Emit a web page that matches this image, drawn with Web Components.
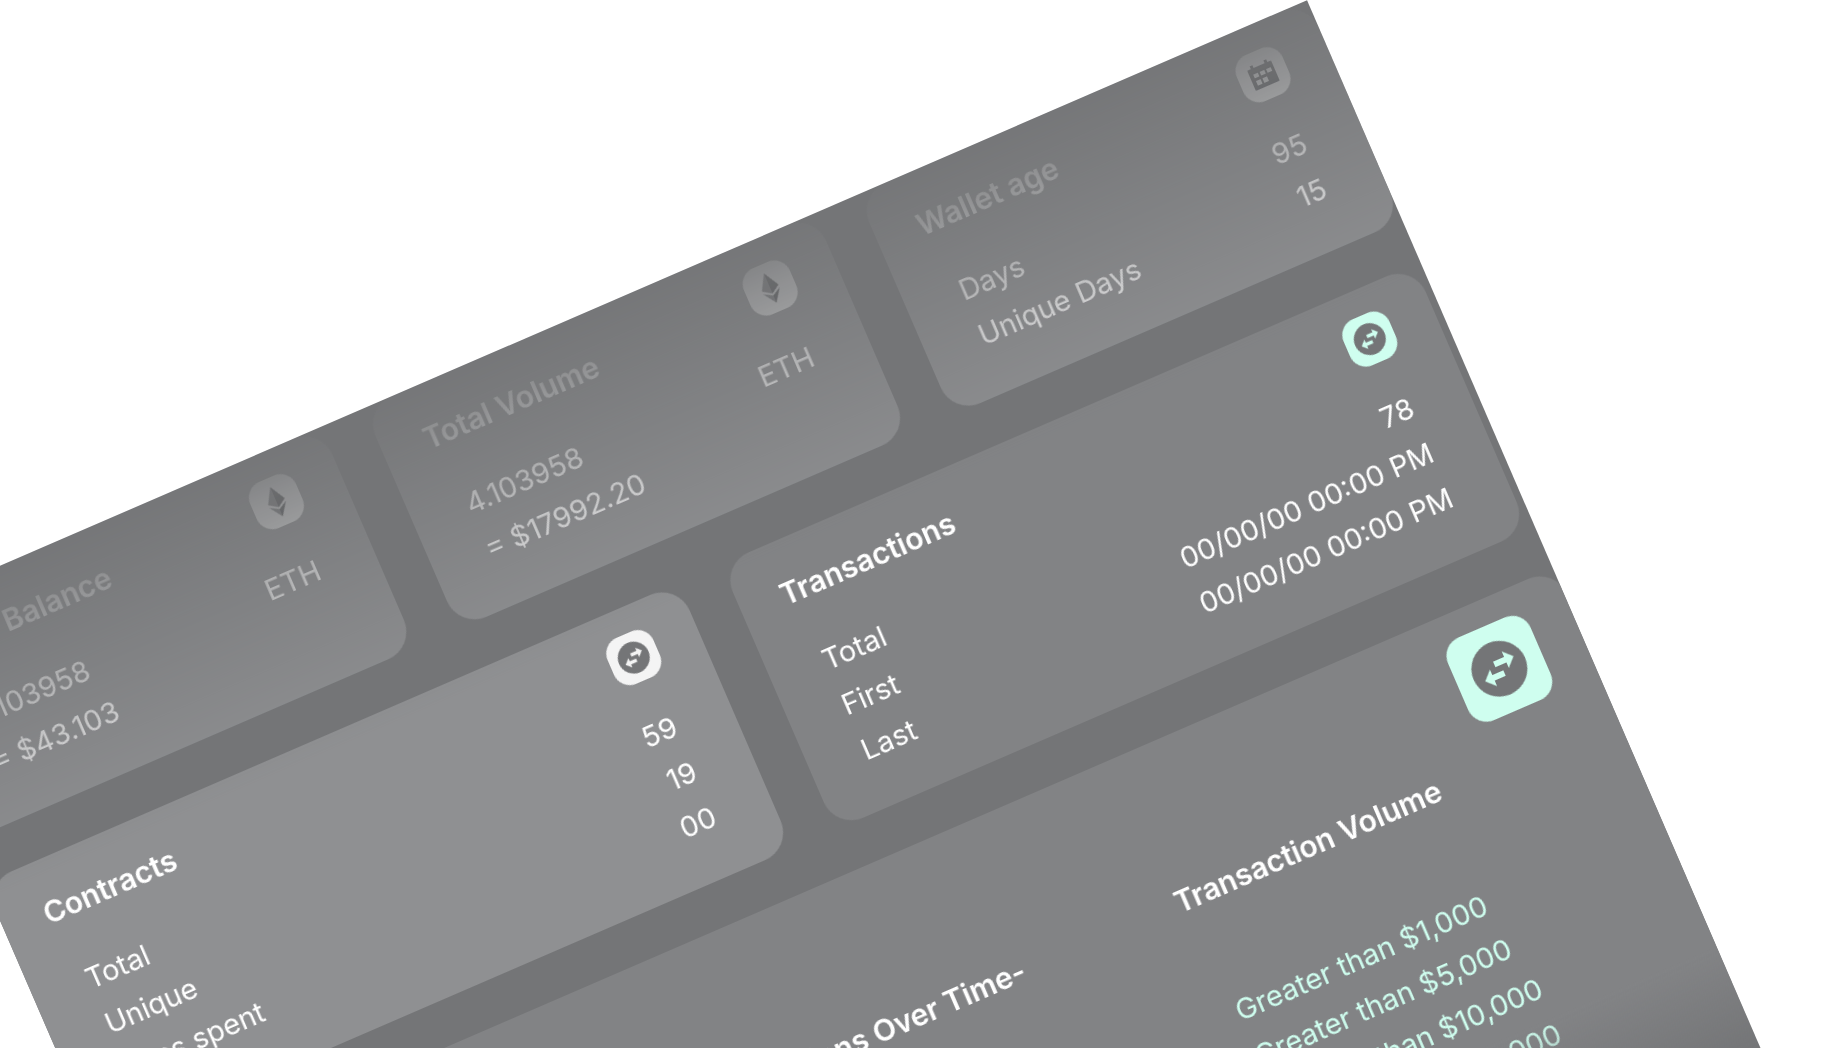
<!DOCTYPE html>
<html lang="en">
<head>
<meta charset="utf-8">
<title>Wallet overview</title>
<style>
    body {
        margin: 0;
        background: #ffffff;
        font-family: Inter, "Liberation Sans", sans-serif;
    }
</style>
</head>
<body>
<wallet-stage>
    <card-row columns="3">
        <stat-card heading="Total Balance" icon="eth">
            <stat-line label="4.103958" value="ETH"></stat-line>
            <stat-line label="= $43.103"></stat-line>
        </stat-card>
        <stat-card heading="Total Volume" icon="eth">
            <stat-line label="4.103958" value="ETH"></stat-line>
            <stat-line label="= $17992.20"></stat-line>
        </stat-card>
        <stat-card heading="Wallet age" icon="calendar">
            <stat-line label="Days" value="95"></stat-line>
            <stat-line label="Unique Days" value="15"></stat-line>
        </stat-card>
    </card-row>
    <card-row columns="2">
        <stat-card heading="Contracts" icon="swap">
            <stat-line label="Total" value="59"></stat-line>
            <stat-line label="Unique" value="19"></stat-line>
            <stat-line label="Fees spent" value="00"></stat-line>
        </stat-card>
        <stat-card heading="Transactions" icon="swap" tone="mint">
            <stat-line label="Total" value="78"></stat-line>
            <stat-line label="First" value="00/00/00 00:00 PM"></stat-line>
            <stat-line label="Last" value="00/00/00 00:00 PM"></stat-line>
        </stat-card>
    </card-row>
    <volume-card>
        <h2 slot="chart">Transactions Over Time-</h2>
        <h2 slot="title">Transaction Volume</h2>
        <li>Greater than $1,000</li>
        <li>Greater than $5,000</li>
        <li>Greater than $10,000</li>
        <li>Greater than $15,000</li>
    </volume-card>
</wallet-stage>

<script>
const ICONS = {
    swap: `
        <svg viewBox="-28 -28 56 56" aria-hidden="true">
            <circle r="28" fill="#747577"/>
            <path fill="var(--tile)" d="M-3 -9H9V-15L18 -6L9 3V-3H-3ZM3 9H-9V15L-18 6L-9 -3V3H3Z"/>
        </svg>`,
    eth: `
        <svg viewBox="-16 -16 32 32" aria-hidden="true">
            <path fill="#707173" d="M0 -16L-9 0L0 6Z"/>
            <path fill="#3c3d3f" d="M0 -16L9 0L0 6Z"/>
            <path fill="#707173" d="M-9 3L0 16V8Z"/>
            <path fill="#3c3d3f" d="M9 3L0 16V8Z"/>
        </svg>`,
    calendar: `
        <svg viewBox="0 0 32 32" aria-hidden="true">
            <path fill="#4c4d4f" fill-rule="evenodd" d="M4 6h3V3h3v3h12V3h3v3h3q1 0 1 1v20q0 1-1 1H4q-1 0-1-1V7q0-1 1-1ZM7 12v4h5v-4ZM14 12v4h5v-4ZM21 12v4h5v-4ZM7 19v5h5v-5ZM14 19v5h5v-5Z"/>
        </svg>`
}

class WalletStage extends HTMLElement {

    constructor() {
        super();
        this.attachShadow({ mode: 'open' });
        this.shadowRoot.innerHTML =
            `
        <style>
        :host {
            display: flex;
            justify-content: flex-end;
            height: 100vh;
            padding-right: 29.2vw;
            box-sizing: border-box;
            overflow: hidden;
        }

        .panel {
            flex: none;
            align-self: flex-start;
            width: 84.8vw;
            overflow: hidden;
            background: #747577;
            transform-origin: top right;
            transform: rotate(-23.4deg);
        }

        /* cards fade into the panel at both ends */
        main {
            display: flex;
            flex-direction: column;
            gap: 45px;
            -webkit-mask-image: linear-gradient(rgba(0, 0, 0, 0.06), #000 310px, #000 1030px, transparent 1140px);
            mask-image: linear-gradient(rgba(0, 0, 0, 0.06), #000 310px, #000 1030px, transparent 1140px);
        }
        </style>
        <div class="panel"><main><slot></slot></main></div>`;
    }
}

class CardRow extends HTMLElement {

    constructor() {
        super();
        this.attachShadow({ mode: 'open' });
        this.shadowRoot.innerHTML =
            `
        <style>
        :host {
            display: grid;
            gap: 47px;
        }

        :host([columns="3"]) {
            grid-template-columns: repeat(3, 1fr);
        }

        :host([columns="2"]) {
            grid-template-columns: repeat(2, 1fr);
            margin-right: 7px;
        }
        </style>
        <slot></slot>`;
    }
}

class IconTile extends HTMLElement {

    constructor() {
        super();
        this.attachShadow({ mode: 'open' });
    }

    connectedCallback() {
        this.shadowRoot.innerHTML =
            `
        <style>
        :host {
            --tile: #f4f4f4;
            display: grid;
            flex: none;
            place-items: center;
            width: 50px;
            height: 50px;
            border-radius: 17px;
            background: var(--tile);
        }

        :host([tone="mint"]) {
            --tile: #cffeef;
        }

        :host([large]) {
            width: 90px;
            height: 90px;
            border-radius: 20px;
        }

        svg {
            display: block;
            width: 32px;
            height: 32px;
        }

        :host([large]) svg {
            width: 56px;
            height: 56px;
        }
        </style>
        ${ICONS[this.getAttribute('name')]}`;
    }
}

class StatLine extends HTMLElement {

    constructor() {
        super();
        this.attachShadow({ mode: 'open' });
    }

    connectedCallback() {
        this.shadowRoot.innerHTML =
            `
        <style>
        :host {
            display: flex;
            justify-content: space-between;
            font-size: 29px;
            font-weight: 400;
            line-height: 49px;
            color: #ffffff;
            white-space: nowrap;
        }
        </style>
        <span>${this.getAttribute('label')}</span>
        <span>${this.getAttribute('value') || ''}</span>`;
    }
}

class StatCard extends HTMLElement {

    constructor() {
        super();
        this.attachShadow({ mode: 'open' });
    }

    connectedCallback() {
        this.shadowRoot.innerHTML =
            `
        <style>
        :host {
            display: block;
            padding: 26px 45px 37px 43px;
            border-radius: 30px;
            background: #8f9092;
        }

        :host([tone="mint"]) {
            background: #828385;
        }

        header {
            display: flex;
            align-items: center;
            justify-content: space-between;
            margin-bottom: 29px;
        }

        h2 {
            margin: 0;
            padding-top: 4px;
            font-size: 30px;
            font-weight: 600;
            line-height: 34px;
            color: #ffffff;
        }

        .lines {
            padding: 0 13px;
        }
        </style>
        <header>
            <h2>${this.getAttribute('heading')}</h2>
            <icon-tile name="${this.getAttribute('icon')}" tone="${this.getAttribute('tone') || ''}"></icon-tile>
        </header>
        <div class="lines"><slot></slot></div>`;
    }
}

class VolumeCard extends HTMLElement {

    constructor() {
        super();
        this.attachShadow({ mode: 'open' });
        this.shadowRoot.innerHTML =
            `
        <style>
        :host {
            display: block;
            margin-right: -3px;
            padding: 26px 47px 80px;
            border-radius: 30px;
            background: #828385;
        }

        icon-tile {
            margin: 0 0 25px auto;
        }

        .columns {
            display: grid;
            grid-template-columns: 1fr 436px;
            column-gap: 165px;
        }

        ::slotted(h2) {
            margin: 0;
            font-size: 30px;
            font-weight: 600;
            line-height: 34px;
            color: #ffffff;
            white-space: nowrap;
        }

        ::slotted(h2[slot="chart"]) {
            text-align: right;
        }

        ul {
            margin: 82px 0 0;
            padding: 0 0 0 13px;
            list-style: none;
            font-size: 29px;
            font-weight: 400;
            line-height: 49px;
            color: #cffeef;
            white-space: nowrap;
        }
        </style>
        <icon-tile name="swap" tone="mint" large></icon-tile>
        <div class="columns">
            <slot name="chart"></slot>
            <section>
                <slot name="title"></slot>
                <ul><slot></slot></ul>
            </section>
        </div>`;
    }
}

customElements.define('icon-tile', IconTile);
customElements.define('stat-line', StatLine);
customElements.define('stat-card', StatCard);
customElements.define('card-row', CardRow);
customElements.define('volume-card', VolumeCard);
customElements.define('wallet-stage', WalletStage);
</script>
</body>
</html>
